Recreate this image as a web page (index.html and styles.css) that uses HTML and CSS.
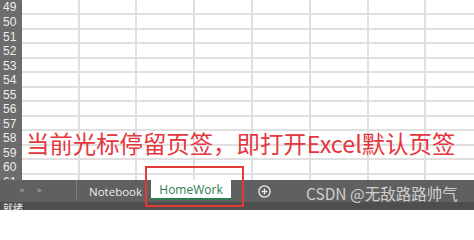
FILE: index.html
```html
<!DOCTYPE html>
<html>
<head>
<meta charset="utf-8">
<link rel="stylesheet" href="styles.css">
</head>
<body>
<div class="screen">
  <div class="sheet">
    <div class="row r15"><div class="hd">49</div><div class="c"></div><div class="c"></div><div class="c"></div><div class="c"></div><div class="c"></div><div class="c"></div><div class="c"></div><div class="c"></div></div>
    <div class="row r15"><div class="hd">50</div><div class="c"></div><div class="c"></div><div class="c"></div><div class="c"></div><div class="c"></div><div class="c"></div><div class="c"></div><div class="c"></div></div>
    <div class="row r14"><div class="hd">51</div><div class="c"></div><div class="c"></div><div class="c"></div><div class="c"></div><div class="c"></div><div class="c"></div><div class="c"></div><div class="c"></div></div>
    <div class="row r15"><div class="hd">52</div><div class="c"></div><div class="c"></div><div class="c"></div><div class="c"></div><div class="c"></div><div class="c"></div><div class="c"></div><div class="c"></div></div>
    <div class="row r14"><div class="hd">53</div><div class="c"></div><div class="c"></div><div class="c"></div><div class="c"></div><div class="c"></div><div class="c"></div><div class="c"></div><div class="c"></div></div>
    <div class="row r15"><div class="hd">54</div><div class="c"></div><div class="c"></div><div class="c"></div><div class="c"></div><div class="c"></div><div class="c"></div><div class="c"></div><div class="c"></div></div>
    <div class="row r14"><div class="hd">55</div><div class="c"></div><div class="c"></div><div class="c"></div><div class="c"></div><div class="c"></div><div class="c"></div><div class="c"></div><div class="c"></div></div>
    <div class="row r15"><div class="hd">56</div><div class="c"></div><div class="c"></div><div class="c"></div><div class="c"></div><div class="c"></div><div class="c"></div><div class="c"></div><div class="c"></div></div>
    <div class="row r14"><div class="hd">57</div><div class="c"></div><div class="c"></div><div class="c"></div><div class="c"></div><div class="c"></div><div class="c"></div><div class="c"></div><div class="c"></div></div>
    <div class="row r15"><div class="hd">58</div><div class="c"></div><div class="c"></div><div class="c"></div><div class="c"></div><div class="c"></div><div class="c"></div><div class="c"></div><div class="c"></div></div>
    <div class="row r14"><div class="hd">59</div><div class="c"></div><div class="c"></div><div class="c"></div><div class="c"></div><div class="c"></div><div class="c"></div><div class="c"></div><div class="c"></div></div>
    <div class="row r15"><div class="hd">60</div><div class="c"></div><div class="c"></div><div class="c"></div><div class="c"></div><div class="c"></div><div class="c"></div><div class="c"></div><div class="c"></div></div>
    <div class="row r14"><div class="hd">61</div><div class="c"></div><div class="c"></div><div class="c"></div><div class="c"></div><div class="c"></div><div class="c"></div><div class="c"></div><div class="c"></div></div>
  </div>
  <div class="tabbar">
    <div class="nav">
      <span class="arrow">&#9664;</span>
      <span class="arrow">&#9654;</span>
    </div>
    <div class="tab">Notebook</div>
    <div class="tab active">HomeWork</div>
    <div class="add">
      <svg width="13" height="13" viewBox="0 0 13 13"><circle cx="6.5" cy="6.5" r="5.6" fill="none" stroke="#f0f0f0" stroke-width="1.3"/><path d="M6.5 3.6v5.8M3.6 6.5h5.8" stroke="#f0f0f0" stroke-width="1.3"/></svg>
    </div>
  </div>
  <div class="status">就绪</div>
  <div class="note">当前光标停留页签，即打开Excel默认页签</div>
  <div class="mark"></div>
  <div class="watermark">CSDN @无敌路路帅气</div>
</div>
</body>
</html>
```
FILE: styles.css
```css
html, body {
  margin: 0;
  padding: 0;
  background: #ffffff;
}
.screen {
  position: relative;
  width: 474px;
  height: 210px;
  overflow: hidden;
  font-family: "Open Sans", "Noto Sans CJK SC", sans-serif;
}
.sheet {
  height: 180px;
  overflow: hidden;
  background: #e0e0e0;
  display: flex;
  flex-direction: column;
  gap: 2px;
}
.row {
  flex: none;
  display: grid;
  grid-template-columns: 20px 56px 55px 56px 56px 56px 56px 55px 55px;
  column-gap: 2px;
}
.r15 { height: 13px; }
.r14 { height: 12px; }
.hd {
  background: #6c6c6c;
  color: #ececec;
  font-family: "Liberation Sans", sans-serif;
  font-size: 12px;
  line-height: 14px;
  padding-left: 3px;
  margin-right: -2px;
  margin-bottom: -2px;
  box-shadow: 0 1px 0 #7a7a7a;
}
.c {
  background: #ffffff;
}
.tabbar {
  height: 22px;
  background: #606060;
  display: flex;
  align-items: stretch;
}
.nav {
  width: 77px;
  display: flex;
  align-items: center;
  gap: 14px;
  padding-left: 19px;
  box-sizing: border-box;
  border-right: 1px solid #808080;
  margin: 0 0 3px 0;
}
.arrow {
  color: #8e8e8e;
  font-size: 6px;
  font-family: "DejaVu Sans", sans-serif;
}
.tab {
  display: flex;
  align-items: center;
  font-size: 11.5px;
  color: #ececec;
}
.tab:nth-child(2) {
  padding-left: 12px;
  width: 62px;
}
.tab.active {
  background: #ffffff;
  color: #2f7a52;
  width: 80px;
  font-size: 12px;
  justify-content: center;
  box-sizing: border-box;
  border-bottom: 2px solid #2e7d4f;
  margin-bottom: 2px;
  padding-top: 1px;
}
.add {
  display: flex;
  align-items: center;
  margin-left: 27px;
}
.status {
  height: 8px;
  background: #4e4e4e;
  color: #f2f2f2;
  font-size: 10px;
  line-height: 12px;
  padding-left: 3px;
  overflow: hidden;
  font-family: "Noto Sans CJK SC", sans-serif;
}
.note {
  position: absolute;
  left: 26px;
  top: 132px;
  font-family: "Noto Sans CJK SC", sans-serif;
  font-size: 23.4px;
  line-height: 23px;
  color: #e6363d;
  white-space: nowrap;
}
.mark {
  position: absolute;
  left: 145px;
  top: 166px;
  width: 99px;
  height: 41px;
  box-sizing: border-box;
  border: 2px solid #e33a3a;
}
.watermark {
  position: absolute;
  left: 306px;
  top: 185px;
  font-family: "Noto Sans CJK SC", sans-serif;
  font-size: 15.5px;
  line-height: 17px;
  color: #cfcfcf;
  white-space: nowrap;
}
```
